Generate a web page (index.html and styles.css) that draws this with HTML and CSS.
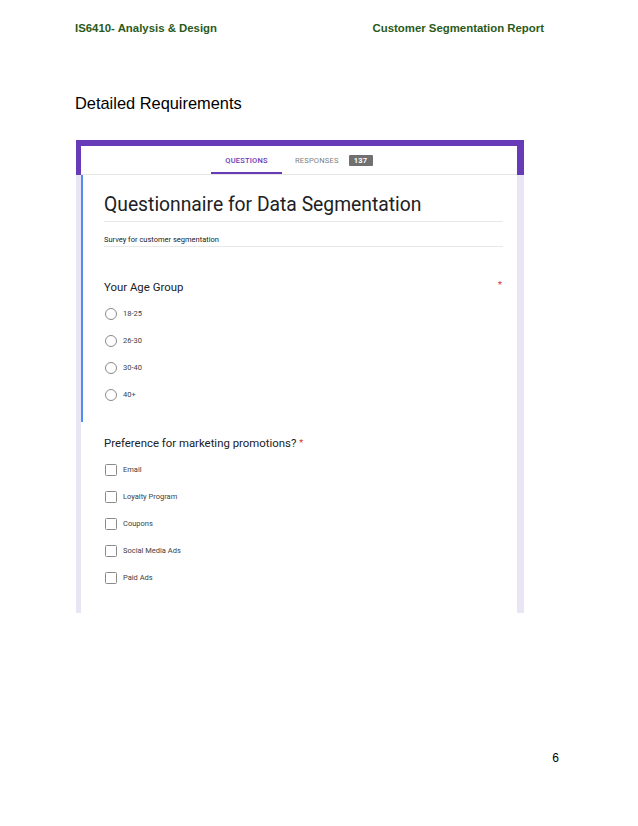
FILE: index.html
```html
<!DOCTYPE html>
<html lang="en">
<head>
  <meta charset="UTF-8">
  <title>Customer Segmentation Report - Detailed Requirements</title>
  <meta name="viewport" content="width=device-width, initial-scale=1.0">
  <link rel="stylesheet" href="styles.css">
</head>
<body>
  <div class="page">
    <div class="doc-header">
      <span>IS6410- Analysis &amp; Design</span>
      <span>Customer Segmentation Report</span>
    </div>

    <h2 class="section-title">Detailed Requirements</h2>

    <!-- screenshot of the google form -->
    <div class="shot">
      <div class="tabs-frame">
        <div class="tabs">
          <div class="tab active">QUESTIONS</div>
          <div class="tab">RESPONSES <span class="badge">137</span></div>
        </div>
      </div>
      <div class="form-frame">
        <div class="card current">
          <div class="form-title">Questionnaire for Data Segmentation</div>
          <div class="form-desc">Survey for customer segmentation</div>

          <div class="question spread">
            <span>Your Age Group</span>
            <span class="req">*</span>
          </div>
          <div class="option"><span class="radio"></span>18-25</div>
          <div class="option"><span class="radio"></span>26-30</div>
          <div class="option"><span class="radio"></span>30-40</div>
          <div class="option"><span class="radio"></span>40+</div>
        </div>

        <div class="card second">
          <div class="question">Preference for marketing promotions? <span class="req">*</span></div>
          <div class="option"><span class="check"></span>Email</div>
          <div class="option"><span class="check"></span>Loyalty Program</div>
          <div class="option"><span class="check"></span>Coupons</div>
          <div class="option"><span class="check"></span>Social Media Ads</div>
          <div class="option"><span class="check"></span>Paid Ads</div>
        </div>
      </div>
    </div>

    <div class="page-num">6</div>
  </div>
</body>
</html>
```

FILE: styles.css
```css
body { margin: 0; background: #fff; color: #000; font-family: Arial, 'Liberation Sans', sans-serif; }
.page { width: 638px; height: 826px; box-sizing: border-box; padding-top: 21px; }
.doc-header { display: flex; justify-content: space-between; padding: 0 94px 0 75px; font-size: 11.4px; line-height: 14px; font-weight: bold; color: #2a5a1a; }
.section-title { margin: 58px 0 0 75px; font-size: 16.4px; line-height: 20px; font-weight: normal; }

.shot { margin: 27px 0 0 76px; width: 448px; height: 473px; font-family: Roboto, 'Liberation Sans', sans-serif; overflow: hidden; }
.tabs-frame { background: #673ab7; padding: 6px 7px 0 5px; }
.tabs { background: #fff; height: 28px; border-bottom: 1px solid #e6e6e6; display: flex; padding-left: 130px; }
.tab { height: 28px; box-sizing: border-box; display: flex; align-items: center; font-size: 7.5px; letter-spacing: 0.2px; color: #808080; }
.tab.active { color: #673ab7; font-weight: 500; border-bottom: 2px solid #673ab7; padding-top: 2px; width: 71px; justify-content: center; margin-right: 13px; }
.badge { margin-left: 10px; background: #707070; color: #fff; font-weight: bold; font-size: 7.5px; width: 24px; height: 11px; display: inline-flex; align-items: center; justify-content: center; border-radius: 1px; }

.form-frame { background: #e9e5f4; padding: 0 7px 0 5px; height: 439px; }
.card { background: #fff; padding: 0 14px 0 21px; }
.card.current { border-left: 2px solid #4f8ef0; padding-left: 21px; padding-top: 18px; padding-bottom: 14px; }
.card.second { padding-left: 23px; padding-top: 13px; height: 178px; }
.form-title { font-size: 19.3px; line-height: 24px; color: #202124; padding-bottom: 4px; border-bottom: 1px solid #e8e8e8; }
.form-desc { margin-top: 13px; font-size: 7.5px; line-height: 10px; color: #202124; padding-bottom: 1px; border-bottom: 1px solid #e8e8e8; }
.question { font-size: 11.4px; line-height: 16px; color: #202124; margin-bottom: 5px; }
.card.current .question { margin-top: 32px; }
.spread { display: flex; justify-content: space-between; }
.req { color: #d93025; font-size: 9px; vertical-align: top; }
.spread .req { margin-right: 1px; line-height: 12px; }
.option { height: 27px; display: flex; align-items: center; font-size: 7.5px; color: #3c4043; }
.radio { width: 10px; height: 10px; border: 1px solid #8a8a8a; border-radius: 50%; margin: 0 6px 0 1px; }
.check { width: 10px; height: 10px; border: 1px solid #8a8a8a; border-radius: 1.5px; margin: 0 6px 0 1px; }

.page-num { margin-top: 138px; padding-right: 79px; text-align: right; font-size: 12px; line-height: 14px; }
```
